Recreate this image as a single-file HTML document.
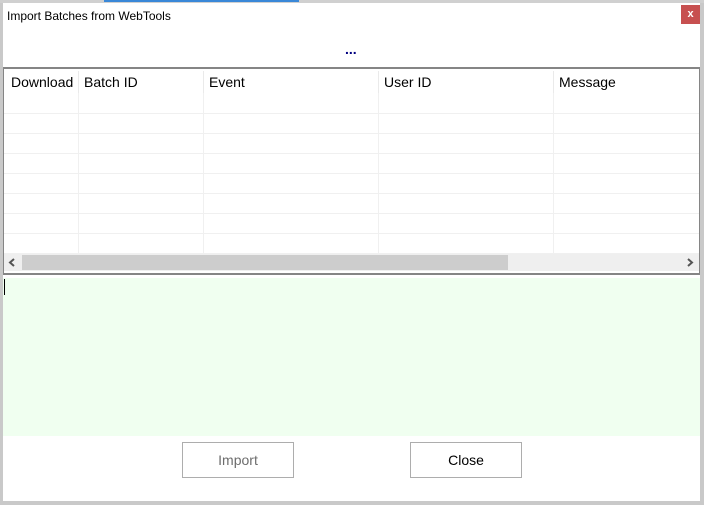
<!DOCTYPE html>
<html><head><style>
body{margin:0;width:704px;height:505px;background:#c9c9c9;position:relative;overflow:hidden;font-family:"Liberation Sans",sans-serif;}
.topstrip{position:absolute;left:0;top:0;width:704px;height:3px;background:#d0d0d0;}
.topstrip i{position:absolute;left:104px;top:0;width:195px;height:2px;background:#3a88d8;}
.win{position:absolute;left:3px;top:3px;width:697px;height:498px;background:#fff;}
.title{position:absolute;left:4px;top:6px;font-size:12px;color:#000;}
.x{position:absolute;left:678px;top:2px;width:19px;height:19px;background:#c75050;color:#fff;font-size:11px;font-weight:bold;text-align:center;line-height:18px;}
.dots{position:absolute;left:342px;top:38px;font-size:14px;font-weight:bold;color:#000080;}
.grid{position:absolute;left:0;top:64px;width:695px;height:204px;border:1px solid #858585;border-bottom:2px solid #858585;border-top:2px solid #858585;background:#fff;}
.hl{position:absolute;left:0;width:695px;height:1px;background:#f0f0f0;}
.vl{position:absolute;top:24px;width:1px;height:162px;background:#f0f0f0;}
.hd{position:absolute;top:5px;font-size:14px;color:#000;}
.sep{position:absolute;top:2px;width:1px;height:22px;background:#eaeaea;}
.sb{position:absolute;left:0;top:185px;width:695px;height:17px;background:#efefef;}
.thumb{position:absolute;left:18px;top:1px;width:486px;height:15px;background:#cdcdcd;}
.green{position:absolute;left:0;top:275px;width:697px;height:158px;background:#f0fff0;}
.caret{position:absolute;left:1px;top:276px;width:1px;height:16px;background:#000;}
.btn{position:absolute;top:439px;width:110px;height:34px;border:1px solid #adadad;background:#fff;text-align:center;line-height:34px;font-size:14px;}
</style></head><body>
<div class="topstrip"><i></i></div>
<div class="win">
<div class="title">Import Batches from WebTools</div>
<div class="x">x</div>
<div class="dots">...</div>
<div class="grid">
 <div class="hd" style="left:7px">Download</div>
 <div class="hd" style="left:80px">Batch ID</div>
 <div class="hd" style="left:205px">Event</div>
 <div class="hd" style="left:380px">User ID</div>
 <div class="hd" style="left:555px">Message</div>
 <div class="sep" style="left:74px"></div><div class="sep" style="left:199px"></div><div class="sep" style="left:374px"></div><div class="sep" style="left:549px"></div>
 <div class="vl" style="left:74px"></div><div class="vl" style="left:199px"></div><div class="vl" style="left:374px"></div><div class="vl" style="left:549px"></div>
 <div class="hl" style="top:44px"></div><div class="hl" style="top:64px"></div><div class="hl" style="top:84px"></div><div class="hl" style="top:104px"></div><div class="hl" style="top:124px"></div><div class="hl" style="top:144px"></div><div class="hl" style="top:164px"></div><div class="hl" style="top:184px"></div>
 <div class="sb"><div class="thumb"></div>
  <svg style="position:absolute;left:4px;top:4px" width="8" height="9"><path d="M6 1L2 4.5L6 8" stroke="#555" stroke-width="2" fill="none"/></svg>
  <svg style="position:absolute;left:682px;top:4px" width="8" height="9"><path d="M2 1L6 4.5L2 8" stroke="#555" stroke-width="2" fill="none"/></svg>
 </div>
</div>
<div class="green"></div>
<div class="caret"></div>
<div class="btn" style="left:179px;color:#6d6d6d">Import</div>
<div class="btn" style="left:407px;color:#000">Close</div>
</div>
</body></html>
